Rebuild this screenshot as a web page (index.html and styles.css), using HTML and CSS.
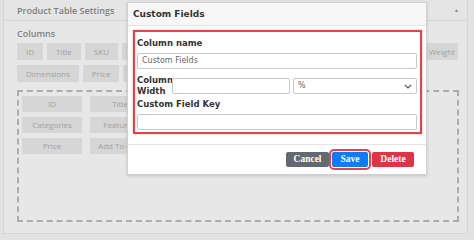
FILE: index.html
```html
<!DOCTYPE html>
<html>
<head>
<meta charset="utf-8">
<link rel="stylesheet" href="styles.css">
</head>
<body>
<div class="panel">
  <div class="panel-head">
    <span class="panel-title">Product Table Settings</span>
    <span class="arrow">▲</span>
  </div>
  <div class="panel-body">
    <div class="section-label">Columns</div>
    <div class="chips">
      <div class="chip-row">
        <span class="chip">ID</span>
        <span class="chip">Title</span>
        <span class="chip">SKU</span>
        <span class="chip w98">Short Description</span>
        <span class="chip w100">Content</span>
        <span class="chip w94">Stock Status</span>
        <span class="chip tight">Weight</span>
      </div>
      <div class="chip-row">
        <span class="chip">Dimensions</span>
        <span class="chip">Price</span>
        <span class="chip">Add To Cart</span>
        <span class="chip">Attributes</span>
      </div>
    </div>
    <div class="dropzone">
      <span class="slot">ID</span>
      <span class="slot">Title</span>
      <span class="slot">Image</span>
      <span class="slot">SKU</span>
      <span class="slot">Categories</span>
      <span class="slot">Featured</span>
      <span class="slot">Tags</span>
      <span class="slot">Stock</span>
      <span class="slot">Price</span>
      <span class="slot">Add To Cart</span>
    </div>
  </div>
</div>

<div class="modal">
  <div class="modal-head">Custom Fields</div>
  <div class="form-box">
    <div class="label first">Column name</div>
    <div class="input">Custom Fields</div>
    <div class="width-row">
      <div class="label two">Column<br>Width</div>
      <div class="input num"></div>
      <div class="input select">%<svg class="chev" width="8" height="5" viewBox="0 0 8 5"><path d="M0.8 0.8 L4 4 L7.2 0.8" fill="none" stroke="#555" stroke-width="1.2"/></svg></div>
    </div>
    <div class="label">Custom Field Key</div>
    <div class="input key"></div>
  </div>
  <div class="modal-foot">
    <span class="btn cancel">Cancel</span>
    <span class="btn save">Save</span>
    <span class="btn delete">Delete</span>
  </div>
</div>
</body>
</html>
```

FILE: styles.css
```css
html, body {
  margin: 0;
  padding: 0;
  background: #e2e2e2;
  width: 474px;
  height: 240px;
  overflow: hidden;
  font-family: "Open Sans", "Noto Sans", sans-serif;
}

.panel {
  margin-left: 3px;
  width: 465px;
  height: 234px;
  border: 1px solid #d5d5d5;
  border-top: none;
  background: #e7e7e7;
  box-sizing: border-box;
}

.panel-head {
  height: 21px;
  border-bottom: 1px solid #d6d6d6;
  display: flex;
  align-items: center;
  justify-content: space-between;
  padding: 0 8px 0 13px;
  box-sizing: border-box;
  background: #e5e5e5;
}

.panel-title {
  font-size: 9px;
  font-weight: 600;
  color: #7e7e7e;
}

.arrow {
  font-size: 5px;
  color: #888;
}

.panel-body {
  padding: 7px 0 0 13px;
}

.section-label {
  font-size: 9px;
  font-weight: 600;
  color: #808080;
  line-height: 12px;
}

.chips {
  margin-top: 3px;
  width: 442px;
  display: flex;
  flex-direction: column;
  gap: 5px;
}

.chip-row {
  display: flex;
  gap: 4px;
  overflow: hidden;
  white-space: nowrap;
}

.chip {
  flex: none;
  height: 17px;
  line-height: 17px;
  padding: 0 9px;
  background: #d6d6d6;
  color: #a2a2a2;
  font-size: 8px;
  white-space: nowrap;
  overflow: hidden;
  box-sizing: border-box;
}

.chip.w98 { width: 98px; }
.chip.w100 { width: 100px; }
.chip.w94 { width: 94px; }
.chip.tight { padding: 0 3px; }

.dropzone {
  margin-top: 8px;
  width: 442px;
  height: 132px;
  box-sizing: border-box;
  border: 2px dashed #acacac;
  padding: 4px 3px;
  display: grid;
  grid-template-columns: repeat(4, 60px);
  grid-auto-rows: 16px;
  gap: 5px 8px;
  align-content: start;
}

.slot {
  background: #d6d6d6;
  color: #a2a2a2;
  font-size: 8px;
  line-height: 16px;
  text-align: center;
  white-space: nowrap;
  overflow: hidden;
}

/* modal overlays the page */
.modal {
  position: absolute;
  left: 127px;
  top: 2px;
  width: 300px;
  height: 173px;
  background: #fff;
  border: 1px solid #d0d0d0;
  box-sizing: border-box;
  box-shadow: 0 1px 3px rgba(0,0,0,0.15);
  font-family: "DejaVu Sans", Verdana, sans-serif;
}

.modal-head {
  height: 23px;
  background: #f7f7f7;
  border-bottom: 1px solid #e3e3e3;
  box-sizing: border-box;
  padding-left: 5px;
  font-size: 9px;
  font-weight: bold;
  color: #333;
  line-height: 23px;
}

.form-box {
  margin: 4px 4px 0 5px;
  border: 2px solid #e0434a;
  box-shadow: 0 0 2px rgba(224,67,74,0.5);
  padding: 0 3px 1px 2px;
  height: 104px;
  box-sizing: border-box;
}

.label {
  font-size: 8.5px;
  font-weight: bold;
  color: #333;
  line-height: 13px;
  white-space: nowrap;
}

.label.first {
  padding-top: 5px;
  margin-bottom: 3px;
}

.label.two {
  line-height: 11px;
  width: 32px;
}

.input {
  height: 16px;
  box-sizing: border-box;
  border: 1px solid #c9c9c9;
  border-radius: 2px;
  background: #fff;
  font-size: 8px;
  color: #666;
  padding-left: 4px;
  line-height: 14px;
}

.width-row {
  margin-top: 6px;
  margin-bottom: 1px;
  display: flex;
  align-items: center;
  gap: 3px;
}

.input.num {
  width: 118px;
}

.input.select {
  flex: 1;
  display: flex;
  align-items: center;
  justify-content: space-between;
  padding-right: 4px;
}

.input.key {
  margin-top: 3px;
}

.modal-foot {
  margin-top: 10px;
  border-top: 1px solid #e5e5e5;
  padding: 7px 12px 0 0;
  display: flex;
  justify-content: flex-end;
  gap: 3px;
}

.btn {
  height: 15px;
  line-height: 15px;
  font-family: "Liberation Serif", "Times New Roman", serif;
  font-weight: bold;
  font-size: 9.5px;
  color: #fff;
  border-radius: 2px;
  text-align: center;
}

.cancel { width: 43px; background: #626a71; }
.save {
  width: 36px;
  background: #0d7cf6;
  outline: 2px solid #e0434a;
  outline-offset: 1px;
  margin-right: 1px;
}
.delete { width: 42px; background: #dc3545; }
```
